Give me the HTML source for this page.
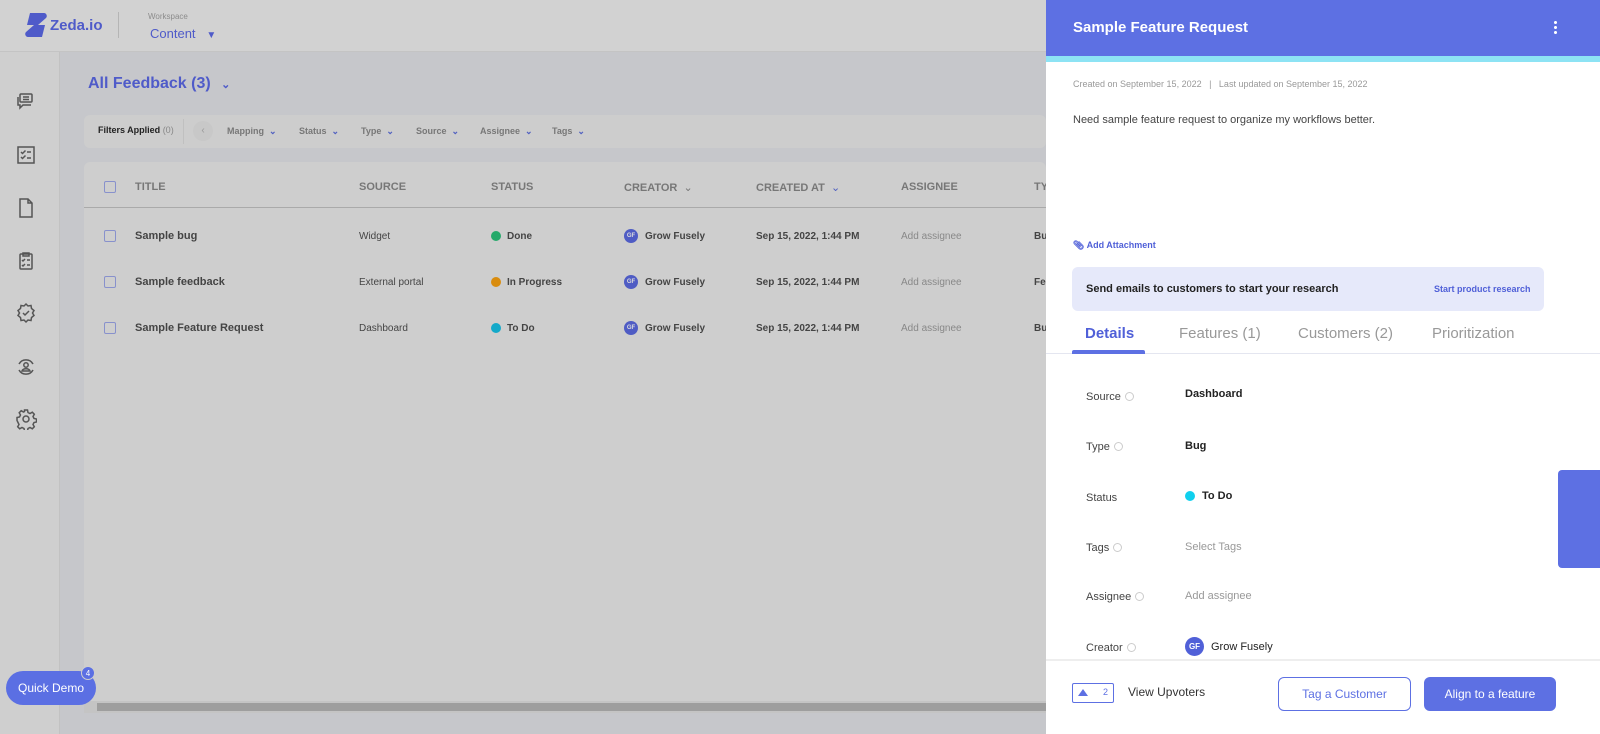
<!DOCTYPE html>
<html><head><meta charset="utf-8"><style>
*{box-sizing:border-box;margin:0;padding:0}
body{width:1600px;height:734px;overflow:hidden;position:relative;font-family:"Liberation Sans",sans-serif;background:#c6c7cb;color:#3a3a3a}
.abs{position:absolute}
.hdr{left:0;top:0;width:1046px;height:52px;background:#d2d2d2;border-bottom:1px solid #c4c4c4}
.side{left:0;top:52px;width:60px;height:682px;background:#cfcfcf;border-right:1px solid #c2c2c2}
.ico{left:15px;width:22px;height:22px}
.t{white-space:nowrap}
.card{left:84px;top:162px;width:962px;height:545px;background:#cecece;border-radius:6px}
.fbar{left:84px;top:115px;width:962px;height:33px;background:#cdcdcd;border-radius:6px}
.cb{width:12px;height:12px;border:1.5px solid #8891cc;border-radius:2px;left:104px}
.th{font-size:11px;font-weight:bold;color:#777;top:181px}
.row{font-size:10px;font-weight:bold;color:#444}
.dot{width:10px;height:10px;border-radius:50%}
.av{width:14px;height:14px;border-radius:50%;background:#4f5cc4;color:#ddd;font-size:6px;font-weight:bold;text-align:center;line-height:14px}
.panel{left:1046px;top:0;width:554px;height:734px;background:#fff}
.lbl{left:1086px;font-size:11px;color:#444}
.val{left:1185px;font-size:11px;font-weight:bold;color:#222}
.i{display:inline-block;width:9px;height:9px;border:1px solid #ccc;border-radius:50%;margin-left:4px;vertical-align:-1px}
.f{top:126px;font-size:9px;font-weight:bold;color:#777}
.f span{color:#5060c0;margin-left:5px}
</style></head><body>
<div class="abs hdr"></div>
<svg class="abs" style="left:24px;top:11px" width="24" height="28" viewBox="0 0 24 28"><path d="M6 2h14a3 3 0 0 1 2 5l-8 7h-11z" fill="#4f5bc9"/><path d="M18 26H4a3 3 0 0 1-2-5l8-7h11z" fill="#4f5bc9"/></svg>
<div class="abs t" style="left:50px;top:17px;font-size:15px;font-weight:bold;color:#4f5bc9">Zeda.io</div>
<div class="abs" style="left:118px;top:12px;width:1px;height:26px;background:#b5b5b5"></div>
<div class="abs t" style="left:148px;top:12px;font-size:8px;color:#8c8c8c">Workspace</div>
<div class="abs t" style="left:150px;top:26px;font-size:13px;color:#4f5bc9">Content &nbsp;&nbsp;<span style="font-size:10px">&#9660;</span></div>

<div class="abs side"></div>
<svg class="abs ico" style="top:90px" viewBox="0 0 22 22" fill="none" stroke="#555" stroke-width="1.5"><rect x="5" y="4" width="12" height="8" rx="1"/><path d="M3 7v8h2v3l3-3h8"/><path d="M8 7h6M8 9.5h6"/></svg>
<svg class="abs ico" style="top:144px" viewBox="0 0 22 22" fill="none" stroke="#555" stroke-width="1.5"><rect x="3" y="3" width="16" height="16"/><path d="M6 8l1.5 1.5 3-3M6 13l1.5 1.5 3-3M12 8h4M12 14h4"/></svg>
<svg class="abs ico" style="top:197px" viewBox="0 0 22 22" fill="none" stroke="#555" stroke-width="1.5"><path d="M5 2h8l4 4v14H5z M13 2v4h4"/></svg>
<svg class="abs ico" style="top:250px" viewBox="0 0 22 22" fill="none" stroke="#555" stroke-width="1.5"><rect x="5" y="4" width="12" height="15" rx="1"/><path d="M8 3h6v3H8z M7 10l1 1 2-2M12 10h3M7 15l1 1 2-2M12 15h3"/></svg>
<svg class="abs ico" style="top:302px" viewBox="0 0 22 22" fill="none" stroke="#555" stroke-width="1.5"><path d="M11 2l2 2 3-.5.5 3 2.5 2-1.5 2.5 1.5 2.5-2.5 2-.5 3-3-.5-2 2-2-2-3 .5-.5-3L3 13.5 4.5 11 3 8.5l2.5-2 .5-3 3 .5z"/><path d="M8 11l2 2 4-4"/></svg>
<svg class="abs ico" style="top:356px" viewBox="0 0 22 22" fill="none" stroke="#555" stroke-width="1.5"><path d="M4 8a8 8 0 0 1 14 0M18 14a8 8 0 0 1-14 0"/><circle cx="11" cy="9" r="2.2"/><path d="M7 15c1-3 7-3 8 0z"/></svg>
<svg class="abs ico" style="top:408px" viewBox="0 0 22 22" fill="none" stroke="#555" stroke-width="1.5"><circle cx="11" cy="11" r="3"/><path d="M9.5 2h3l.5 2.5 2 1 2.3-1.3 2 2-1.3 2.3 1 2 2.5.5v3l-2.5.5-1 2 1.3 2.3-2 2-2.3-1.3-2 1-.5 2.5h-3l-.5-2.5-2-1-2.3 1.3-2-2 1.3-2.3-1-2L2 12.5v-3l2.5-.5 1-2L4.2 4.7l2-2L8.5 4l1-.5z"/></svg>

<div class="abs t" style="left:88px;top:75px;font-size:16px;font-weight:bold;color:#4f5bc9">All Feedback (3) <span style="font-size:11px;margin-left:6px">&#8964;</span></div>
<div class="abs fbar"></div>
<div class="abs t" style="left:98px;top:125px;font-size:9px;font-weight:bold;color:#222">Filters Applied <span style="color:#888;font-weight:normal">(0)</span></div>
<div class="abs" style="left:183px;top:119px;width:1px;height:25px;background:#c0c0c0"></div>
<div class="abs" style="left:193px;top:121px;width:20px;height:20px;border-radius:50%;background:#c8c8c8;color:#999;font-size:10px;text-align:center;line-height:20px">&lsaquo;</div>
<div class="abs t f" style="left:227px">Mapping<span>&#8964;</span></div>
<div class="abs t f" style="left:299px">Status<span>&#8964;</span></div>
<div class="abs t f" style="left:361px">Type<span>&#8964;</span></div>
<div class="abs t f" style="left:416px">Source<span>&#8964;</span></div>
<div class="abs t f" style="left:480px">Assignee<span>&#8964;</span></div>
<div class="abs t f" style="left:552px">Tags<span>&#8964;</span></div>

<div class="abs card"></div>
<div class="abs" style="left:84px;top:207px;width:962px;height:1px;background:#aaa"></div>
<div class="abs cb" style="top:181px"></div>
<div class="abs th t" style="left:135px">TITLE</div>
<div class="abs th t" style="left:359px">SOURCE</div>
<div class="abs th t" style="left:491px">STATUS</div>
<div class="abs th t" style="left:624px">CREATOR &nbsp;<span style="font-weight:normal">&#8964;</span></div>
<div class="abs th t" style="left:756px">CREATED AT &nbsp;<span style="font-weight:normal;color:#5060c0">&#8964;</span></div>
<div class="abs th t" style="left:901px">ASSIGNEE</div>
<div class="abs th t" style="left:1034px">TY</div>

<div class="abs cb" style="top:230px"></div><div class="abs t row" style="left:135px;top:230px;font-size:11px">Sample bug</div><div class="abs t row" style="left:359px;top:231px;font-weight:normal">Widget</div><div class="abs dot" style="left:491px;top:231px;background:#25a96a"></div><div class="abs t row" style="left:507px;top:231px">Done</div><div class="abs av" style="left:624px;top:229px">GF</div><div class="abs t row" style="left:645px;top:231px">Grow Fusely</div><div class="abs t row" style="left:756px;top:231px">Sep 15, 2022, 1:44 PM</div><div class="abs t row" style="left:901px;top:231px;color:#888;font-weight:normal">Add assignee</div><div class="abs t row" style="left:1034px;top:231px">Bu</div>
<div class="abs cb" style="top:276px"></div><div class="abs t row" style="left:135px;top:276px;font-size:11px">Sample feedback</div><div class="abs t row" style="left:359px;top:277px;font-weight:normal">External portal</div><div class="abs dot" style="left:491px;top:277px;background:#d98c0e"></div><div class="abs t row" style="left:507px;top:277px">In Progress</div><div class="abs av" style="left:624px;top:275px">GF</div><div class="abs t row" style="left:645px;top:277px">Grow Fusely</div><div class="abs t row" style="left:756px;top:277px">Sep 15, 2022, 1:44 PM</div><div class="abs t row" style="left:901px;top:277px;color:#888;font-weight:normal">Add assignee</div><div class="abs t row" style="left:1034px;top:277px">Fe</div>
<div class="abs cb" style="top:322px"></div><div class="abs t row" style="left:135px;top:322px;font-size:11px">Sample Feature Request</div><div class="abs t row" style="left:359px;top:323px;font-weight:normal">Dashboard</div><div class="abs dot" style="left:491px;top:323px;background:#14a9c9"></div><div class="abs t row" style="left:507px;top:323px">To Do</div><div class="abs av" style="left:624px;top:321px">GF</div><div class="abs t row" style="left:645px;top:323px">Grow Fusely</div><div class="abs t row" style="left:756px;top:323px">Sep 15, 2022, 1:44 PM</div><div class="abs t row" style="left:901px;top:323px;color:#888;font-weight:normal">Add assignee</div><div class="abs t row" style="left:1034px;top:323px">Bu</div>

<div class="abs" style="left:84px;top:701px;width:962px;height:12px;background:#c4c4c4"></div>
<div class="abs" style="left:97px;top:703px;width:949px;height:8px;background:#9e9e9e"></div>
<div class="abs t" style="left:6px;top:671px;width:90px;height:34px;border-radius:17px;background:#5b6fe3;color:#fff;font-size:12px;text-align:center;line-height:34px">Quick Demo</div>
<div class="abs" style="left:81px;top:666px;width:14px;height:14px;border-radius:50%;background:#5b6fe3;color:#fff;font-size:8px;text-align:center;line-height:14px;border:1px solid #cfcfcf">4</div>

<div class="abs panel"></div>
<div class="abs" style="left:1046px;top:0;width:554px;height:56px;background:#5d70e3"></div>
<div class="abs" style="left:1046px;top:56px;width:554px;height:6px;background:#8de3f4"></div>
<div class="abs t" style="left:1073px;top:19px;font-size:15px;font-weight:bold;color:#fff">Sample Feature Request</div>
<div class="abs" style="left:1554px;top:20px;width:3px;height:15px;background:radial-gradient(circle,#fff 1.4px,transparent 1.6px) 0 0/3px 5px"></div>
<div class="abs t" style="left:1073px;top:79px;font-size:9px;color:#999">Created on September 15, 2022 &nbsp;&nbsp;| &nbsp;&nbsp;Last updated on September 15, 2022</div>
<div class="abs t" style="left:1073px;top:114px;font-size:11px;color:#444">Need sample feature request to organize my workflows better.</div>
<div class="abs t" style="left:1073px;top:240px;font-size:9px;font-weight:bold;color:#5060d8">&#128206;&#xFE0E; Add Attachment</div>
<div class="abs" style="left:1072px;top:267px;width:472px;height:44px;background:#e6e9fa;border-radius:6px"></div>
<div class="abs t" style="left:1086px;top:283px;font-size:11px;font-weight:bold;color:#222">Send emails to customers to start your research</div>
<div class="abs t" style="left:1434px;top:284px;font-size:9px;font-weight:bold;color:#5060d8">Start product research</div>
<div class="abs t" style="left:1085px;top:325px;font-size:15px;font-weight:bold;color:#5060d8">Details</div>
<div class="abs t" style="left:1179px;top:325px;font-size:15px;color:#999">Features (1)</div>
<div class="abs t" style="left:1298px;top:325px;font-size:15px;color:#999">Customers (2)</div>
<div class="abs t" style="left:1432px;top:325px;font-size:15px;color:#999">Prioritization</div>
<div class="abs" style="left:1046px;top:353px;width:554px;height:1px;background:#e4e6f0"></div>
<div class="abs" style="left:1072px;top:350px;width:73px;height:4px;background:#5d70e3;border-radius:2px 2px 0 0"></div>

<div class="abs t lbl" style="top:391px">Source<span class="i"></span></div><div class="abs t val" style="top:388px">Dashboard</div>
<div class="abs t lbl" style="top:441px">Type<span class="i"></span></div><div class="abs t val" style="top:440px">Bug</div>
<div class="abs t lbl" style="top:492px">Status</div><div class="abs dot" style="left:1185px;top:491px;background:#10d0ee"></div><div class="abs t val" style="left:1202px;top:490px">To Do</div>
<div class="abs t lbl" style="top:542px">Tags<span class="i"></span></div><div class="abs t val" style="top:541px;color:#999;font-weight:normal">Select Tags</div>
<div class="abs t lbl" style="top:591px">Assignee<span class="i"></span></div><div class="abs t val" style="top:590px;color:#999;font-weight:normal">Add assignee</div>
<div class="abs t lbl" style="top:642px">Creator<span class="i"></span></div><div class="abs av" style="left:1185px;top:637px;width:19px;height:19px;line-height:19px;font-size:8px;background:#5060d8;color:#fff">GF</div><div class="abs t val" style="left:1211px;top:641px;font-weight:normal">Grow Fusely</div>
<div class="abs" style="left:1046px;top:659px;width:554px;height:75px;background:#fff;border-top:2px solid #eee"></div>
<div class="abs" style="left:1072px;top:683px;width:42px;height:20px;border:1px solid #5d70e3;border-radius:2px"></div>
<div class="abs" style="left:1078px;top:689px;width:0;height:0;border-left:5px solid transparent;border-right:5px solid transparent;border-bottom:7px solid #5d70e3"></div>
<div class="abs t" style="left:1103px;top:687px;font-size:9px;color:#5d70e3">2</div>
<div class="abs t" style="left:1128px;top:685px;font-size:12px;color:#333">View Upvoters</div>
<div class="abs t" style="left:1278px;top:677px;width:133px;height:34px;border:1px solid #5d70e3;border-radius:6px;color:#5d70e3;font-size:12px;text-align:center;line-height:32px">Tag a Customer</div>
<div class="abs t" style="left:1424px;top:677px;width:132px;height:34px;background:#5d70e3;border-radius:6px;color:#fff;font-size:12px;text-align:center;line-height:34px">Align to a feature</div>
<div class="abs" style="left:1558px;top:470px;width:42px;height:98px;background:#5d70e3;border-radius:4px 0 0 4px"></div>
</body></html>
